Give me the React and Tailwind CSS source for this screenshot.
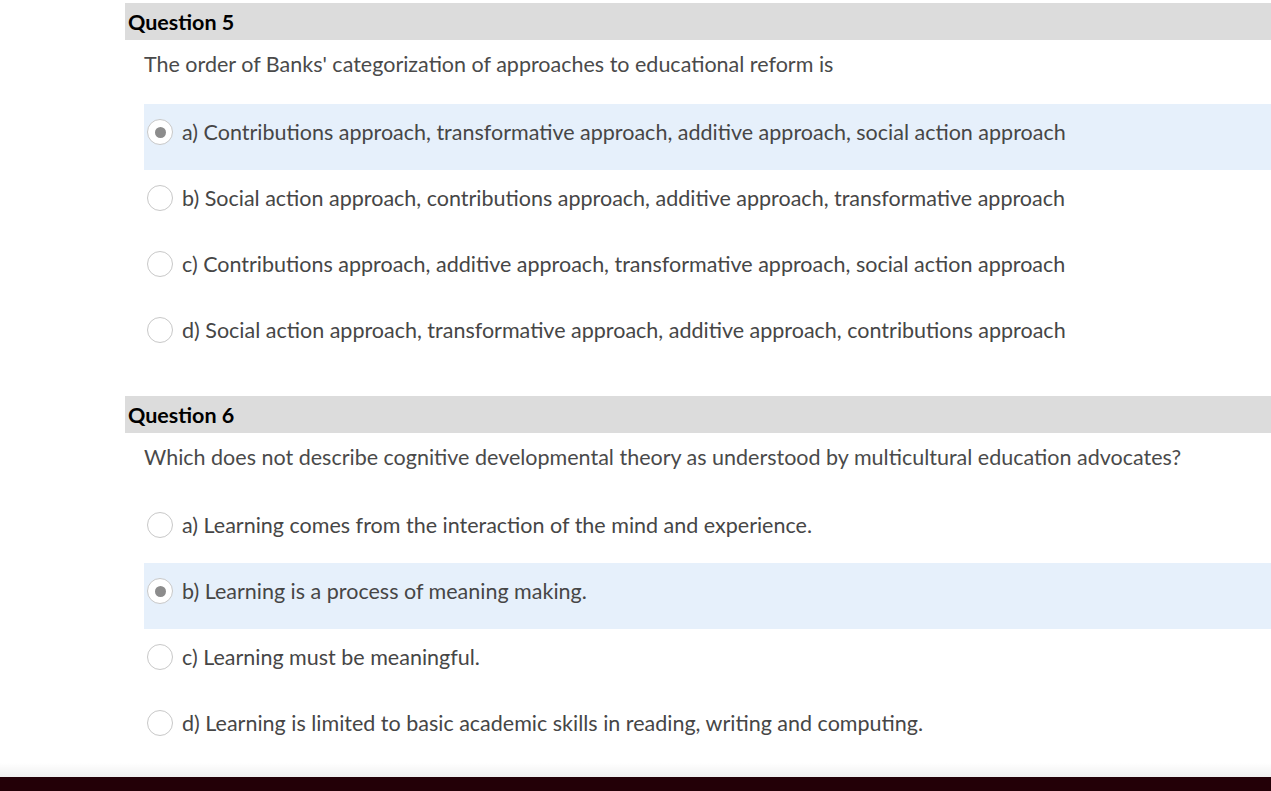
import React from "react";

const q5 = [
  { t: "a) Contributions approach, transformative approach, additive approach, social action approach", sel: true },
  { t: "b) Social action approach, contributions approach, additive approach, transformative approach" },
  { t: "c) Contributions approach, additive approach, transformative approach, social action approach" },
  { t: "d) Social action approach, transformative approach, additive approach, contributions approach" },
];
const q6 = [
  { t: "a) Learning comes from the interaction of the mind and experience." },
  { t: "b) Learning is a process of meaning making.", sel: true },
  { t: "c) Learning must be meaningful." },
  { t: "d) Learning is limited to basic academic skills in reading, writing and computing." },
];

function Radio({ sel }) {
  return (
    <div className="w-[26px] h-[26px] rounded-full border border-[#c8c8c8] bg-white flex items-center justify-center shrink-0">
      {sel && <div className="w-[11px] h-[11px] rounded-full bg-[#8c8c8c]" />}
    </div>
  );
}

function Question({ title, text, options }) {
  return (
    <div className="flex flex-col">
      <div className="h-[37px] bg-[#dcdcdc] flex items-center pl-[3px] text-[21.5px] leading-[28px] font-bold text-black">
        {title}
      </div>
      <div className="h-[64px] pl-[19px] pt-[10px] text-[21.5px] leading-[28px] text-[#4a4a4a]">{text}</div>
      <div className="flex flex-col ml-[19px]">
        {options.map((o, i) => (
          <div
            key={i}
            className={`h-[66px] flex items-center pb-[10px] pl-[3px] gap-[9px] text-[21.5px] leading-[28px] text-[#464646] ${o.sel ? "bg-[#e6f0fb]" : ""}`}
          >
            <Radio sel={o.sel} />
            <span>{o.t}</span>
          </div>
        ))}
      </div>
    </div>
  );
}

export default function App() {
  return (
    <div className="w-[1271px] h-[791px] bg-white overflow-hidden flex flex-col" style={{ fontFamily: "Lato, 'Open Sans', sans-serif" }}>
      <div className="pl-[125px] pt-[3px] flex flex-col gap-[28px] flex-1">
        <Question title="Question 5" text="The order of Banks' categorization of approaches to educational reform is" options={q5} />
        <Question title="Question 6" text="Which does not describe cognitive developmental theory as understood by multicultural education advocates?" options={q6} />
      </div>
      <div className="h-[14px] bg-gradient-to-b from-white to-[#f0f0f0]" />
      <div className="h-[14px] bg-[#230007]" />
    </div>
  );
}
